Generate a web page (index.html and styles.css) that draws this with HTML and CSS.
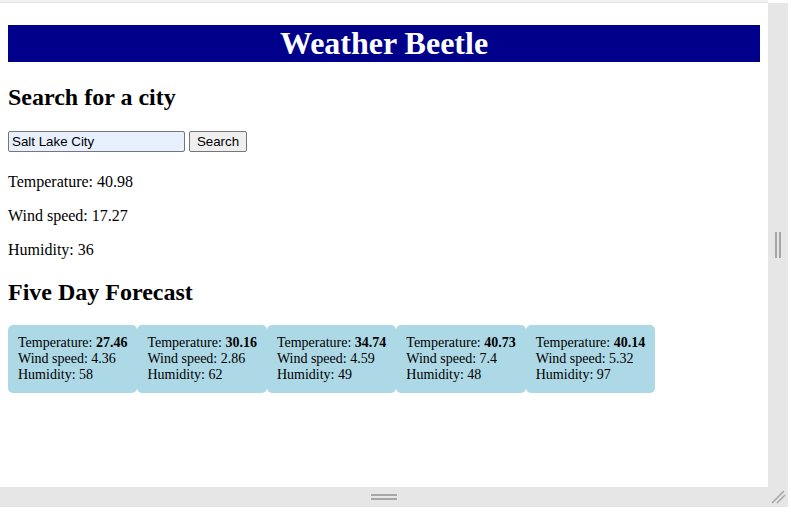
FILE: index.html
```html
<!DOCTYPE html>
<html lang="en">
<head>
<meta charset="utf-8">
<title>Weather Beetle</title>
<link rel="stylesheet" href="styles.css">
</head>
<body>
<div class="frame">
  <div class="topstrip"></div>
  <div class="topcorner"></div>
  <main class="page">
    <h1 class="title">Weather Beetle</h1>
    <h2 class="heading">Search for a city</h2>
    <form class="search">
      <input class="city" type="text" value="Salt Lake City">
      <button class="btn" type="button">Search</button>
    </form>
    <p class="stat">Temperature: 40.98</p>
    <p class="stat">Wind speed: 17.27</p>
    <p class="stat">Humidity: 36</p>
    <h2 class="heading">Five Day Forecast</h2>
    <div class="forecast">
      <div class="card">
        <div>Temperature: <b>27.46</b></div>
        <div>Wind speed: 4.36</div>
        <div>Humidity: 58</div>
      </div>
      <div class="card">
        <div>Temperature: <b>30.16</b></div>
        <div>Wind speed: 2.86</div>
        <div>Humidity: 62</div>
      </div>
      <div class="card">
        <div>Temperature: <b>34.74</b></div>
        <div>Wind speed: 4.59</div>
        <div>Humidity: 49</div>
      </div>
      <div class="card">
        <div>Temperature: <b>40.73</b></div>
        <div>Wind speed: 7.4</div>
        <div>Humidity: 48</div>
      </div>
      <div class="card">
        <div>Temperature: <b>40.14</b></div>
        <div>Wind speed: 5.32</div>
        <div>Humidity: 97</div>
      </div>
    </div>
  </main>
  <div class="vbar">
    <svg class="grip-v" width="6" height="26" viewBox="0 0 6 26"><rect x="0" y="0" width="2" height="26" fill="#a6a6a6"/><rect x="4" y="0" width="2" height="26" fill="#a6a6a6"/></svg>
  </div>
  <div class="hbar">
    <svg class="grip-h" width="26" height="6" viewBox="0 0 26 6"><rect x="0" y="0" width="26" height="2" fill="#a6a6a6"/><rect x="0" y="4" width="26" height="2" fill="#a6a6a6"/></svg>
  </div>
  <div class="corner">
    <svg width="20" height="20" viewBox="0 0 20 20"><line x1="4" y1="16" x2="16" y2="4" stroke="#a6a6a6" stroke-width="1.6"/><line x1="9" y1="16" x2="17" y2="8" stroke="#a6a6a6" stroke-width="1.6"/></svg>
  </div>
</div>
</body>
</html>
```
FILE: styles.css
```css
html, body {
  margin: 0;
  padding: 0;
  background: #ffffff;
}
body {
  font-family: "Liberation Serif", "Times New Roman", serif;
  font-size: 16px;
  color: #000000;
  width: 791px;
  height: 512px;
  overflow: hidden;
}
.frame {
  display: grid;
  grid-template-columns: 768px 20px;
  grid-template-rows: 3px 484px 20px;
}
.topstrip {
  background: #f1f1f1;
  border-bottom: 1px solid #e4e4e4;
  box-sizing: border-box;
}
.topcorner {
  background: #ffffff;
}
.page {
  padding: 0 8px;
  overflow: hidden;
}
.title {
  margin: 22px 0 22px 0;
  background: #00008b;
  color: #ffffff;
  text-align: center;
  font-size: 32px;
  font-weight: bold;
  line-height: 37px;
}
.heading {
  font-size: 24px;
  font-weight: bold;
  margin: 19px 0;
  line-height: 27.6px;
}
.search {
  display: flex;
  gap: 4px;
  margin: 0 0 21px 0;
}
.city {
  appearance: none;
  box-sizing: border-box;
  width: 177px;
  height: 21px;
  margin: 0;
  padding: 1px 3px;
  border: 1px solid #767676;
  border-radius: 2px;
  background: #e8f0fe;
  font-family: "Liberation Sans", Arial, sans-serif;
  font-size: 13.333px;
  color: #000000;
}
.btn {
  appearance: none;
  box-sizing: border-box;
  width: 58px;
  height: 21px;
  margin: 0;
  padding: 1px 6px;
  border: 1px solid #767676;
  border-radius: 2px;
  background: #efefef;
  font-family: "Liberation Sans", Arial, sans-serif;
  font-size: 13.333px;
  color: #000000;
}
.stat {
  margin: 16px 0;
  line-height: 18.4px;
}
.forecast {
  display: flex;
  align-items: flex-start;
}
.card {
  background: #add8e6;
  border-radius: 5px;
  padding: 10px;
  font-size: 14px;
  line-height: 16px;
}
.vbar {
  grid-column: 2;
  grid-row: 2;
  background: #e6e6e6;
  display: flex;
  align-items: center;
  justify-content: center;
}
.hbar {
  grid-column: 1;
  grid-row: 3;
  background: #e6e6e6;
  display: flex;
  align-items: center;
  justify-content: center;
}
.corner {
  grid-column: 2;
  grid-row: 3;
  background: #e6e6e6;
  display: flex;
}
.grip-v, .grip-h {
  display: block;
}
```
